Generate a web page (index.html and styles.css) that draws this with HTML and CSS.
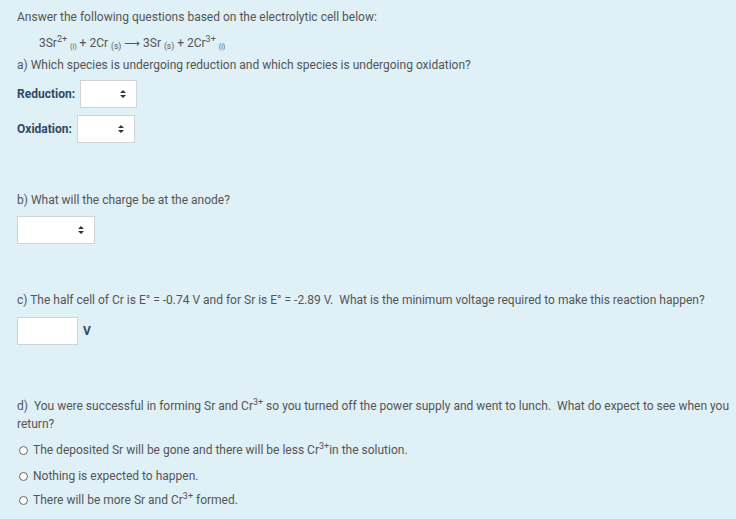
FILE: index.html
```html
<!DOCTYPE html>
<html>
<head>
<meta charset="utf-8">
<link rel="stylesheet" href="styles.css">
</head>
<body>
<div class="page">
  <p class="line intro">Answer the following questions based on the electrolytic cell below:</p>
  <p class="line eq">3Sr<sup>2+</sup> <sub class="ph">(l)</sub> + 2Cr <sub>(s)</sub> <span class="arrow">&#10230;</span> 3Sr <sub>(s)</sub> + 2Cr<sup>3+</sup> <sub class="ph">(l)</sub></p>
  <p class="line qa">a) Which species is undergoing reduction and which species is undergoing oxidation?</p>
  <div class="field red">
    <span class="lbl">Reduction:</span>
    <span class="sel w57"><svg class="arr" width="6" height="8" viewBox="0 0 6 8"><path d="M3 0 L6 3 L0 3 Z M0 5 L6 5 L3 8 Z" fill="#333"/></svg></span>
  </div>
  <div class="field ox">
    <span class="lbl">Oxidation:</span>
    <span class="sel w58"><svg class="arr" width="6" height="8" viewBox="0 0 6 8"><path d="M3 0 L6 3 L0 3 Z M0 5 L6 5 L3 8 Z" fill="#333"/></svg></span>
  </div>
  <p class="line qb">b) What will the charge be at the anode?</p>
  <div class="field fb">
    <span class="sel w78"><svg class="arr" width="6" height="8" viewBox="0 0 6 8"><path d="M3 0 L6 3 L0 3 Z M0 5 L6 5 L3 8 Z" fill="#333"/></svg></span>
  </div>
  <p class="line qc">c) The half cell of Cr is E&deg; = -0.74 V and for Sr is E&deg; = -2.89 V.&nbsp; What is the minimum voltage required to make this reaction happen?</p>
  <div class="field fc">
    <span class="inp"></span>
    <span class="lbl">V</span>
  </div>
  <p class="line qd">d)&nbsp; You were successful in forming Sr and Cr<sup>3+</sup> so you turned off the power supply and went to lunch.&nbsp; What do expect to see when you return?</p>
  <div class="opt o1"><span class="radio"></span><span class="otext">The deposited Sr will be gone and there will be less Cr<sup>3+</sup>in the solution.</span></div>
  <div class="opt o2"><span class="radio"></span><span class="otext">Nothing is expected to happen.</span></div>
  <div class="opt o3"><span class="radio"></span><span class="otext">There will be more Sr and Cr<sup>3+</sup> formed.</span></div>
</div>
</body>
</html>
```

FILE: styles.css
```css
html, body {
  margin: 0;
  padding: 0;
  background: #dff0f7;
}
body {
  font-family: Roboto, "Liberation Sans", sans-serif;
  font-size: 12px;
  color: #555;
  line-height: 18px;
}
.page {
  padding: 8px 4px 0 17px;
}
.line {
  margin: 0;
  line-height: 18px;
}
sup {
  font-size: 9px;
  line-height: 0;
  vertical-align: 5px;
}
sub {
  font-size: 8.5px;
  line-height: 0;
  vertical-align: -2px;
}
sub.ph {
  font-size: 7px;
}
.arrow {
  font-family: "DejaVu Sans", sans-serif;
  font-size: 11px;
}
.eq {
  margin-top: 8px;
  padding-left: 22px;
  height: 18px;
}
.qa { margin-top: 4px; }
.field {
  display: flex;
  align-items: center;
  gap: 5px;
}
.red { margin-top: 6px; }
.ox { margin-top: 7px; }
.lbl {
  font-weight: bold;
  color: #2f4a63;
}
.sel, .inp {
  box-sizing: border-box;
  height: 28px;
  background: #fff;
  border: 1px solid #cfd4d8;
  display: flex;
  align-items: center;
  justify-content: flex-end;
}
.w57 { width: 57px; }
.w58 { width: 58px; }
.w78 { width: 78px; }
.inp { width: 61px; }
.arr { margin-right: 10px; }
.qb { margin-top: 48px; }
.fb { margin-top: 7px; }
.qc { margin-top: 47px; }
.fc { margin-top: 8px; }
.qd { margin-top: 52px; padding-right: 0; }
.opt {
  display: flex;
  align-items: center;
  line-height: 18px;
  padding-left: 2px;
}
.o1 { margin-top: 8px; }
.o2 { margin-top: 8px; }
.o3 { margin-top: 6px; }
.radio {
  box-sizing: border-box;
  width: 9px;
  height: 9px;
  border: 1px solid #666;
  border-radius: 50%;
  background: #fff;
  margin-right: 5px;
  flex: none;
}
```
